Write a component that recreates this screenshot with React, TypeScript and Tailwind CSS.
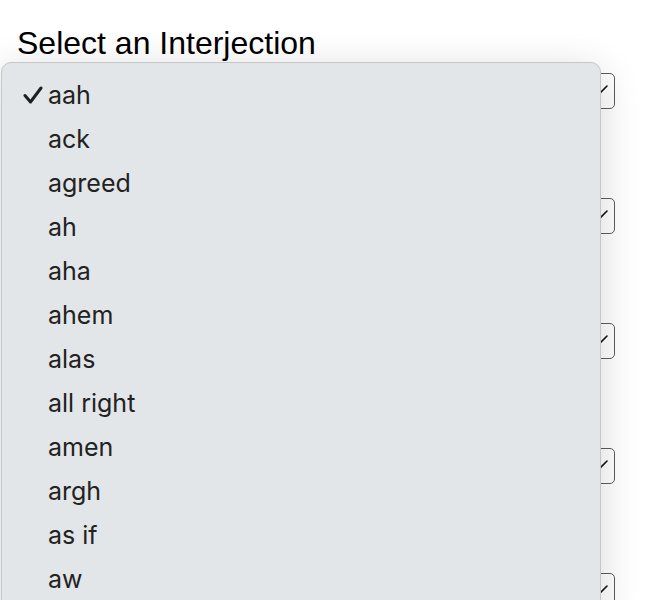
import React from "react";

const items = [
  "aah",
  "ack",
  "agreed",
  "ah",
  "aha",
  "ahem",
  "alas",
  "all right",
  "amen",
  "argh",
  "as if",
  "aw",
];

function SelectBox() {
  return (
    <div className="relative h-[36px] w-[230px] rounded-[5px] border-[1.5px] border-[#5c5c5c] bg-white">
      <svg
        className="absolute right-[6px] top-[8px]"
        width="16"
        height="16"
        viewBox="0 0 16 16"
        fill="none"
      >
        <path d="M1 4 L8 11 L15 4" stroke="#111" strokeWidth="1.6" strokeLinecap="round" />
      </svg>
    </div>
  );
}

export default function App() {
  return (
    <div className="relative h-[600px] w-[670px] overflow-hidden bg-white" style={{ fontFamily: "'Liberation Sans', Arial, sans-serif" }}>
      <div className="pl-[17px] pt-[25px]">
        <h1 className="text-[32px] leading-[37px] font-normal text-black">Select an Interjection</h1>
      </div>
      <div className="mt-[11px] flex flex-col items-end gap-[89px] pr-[55px]">
        <SelectBox />
        <SelectBox />
        <SelectBox />
        <SelectBox />
        <SelectBox />
      </div>

      <div className="absolute left-[1px] top-[62px] h-[560px] w-[600px] rounded-[10px] border border-[#c4c6c8] bg-[#e3e6e8] pt-[10px] shadow-[0_8px_40px_rgba(0,0,0,0.16)]">
        {items.map((it, i) => (
          <div
            key={it}
            className="flex h-[44px] items-center text-[25px] leading-[30px] text-[#222]"
            style={{ fontFamily: "Inter, 'Noto Sans', sans-serif" }}
          >
            <div className="flex w-[46px] justify-end pr-[5px]">
              {i === 0 && (
                <svg width="20" height="20" viewBox="0 0 20 20" fill="none">
                  <path d="M2 10.5 L7.5 17 L18 3" stroke="#1f1f1f" strokeWidth="3" strokeLinecap="round" strokeLinejoin="round" />
                </svg>
              )}
            </div>
            <span>{it}</span>
          </div>
        ))}
      </div>
    </div>
  );
}
